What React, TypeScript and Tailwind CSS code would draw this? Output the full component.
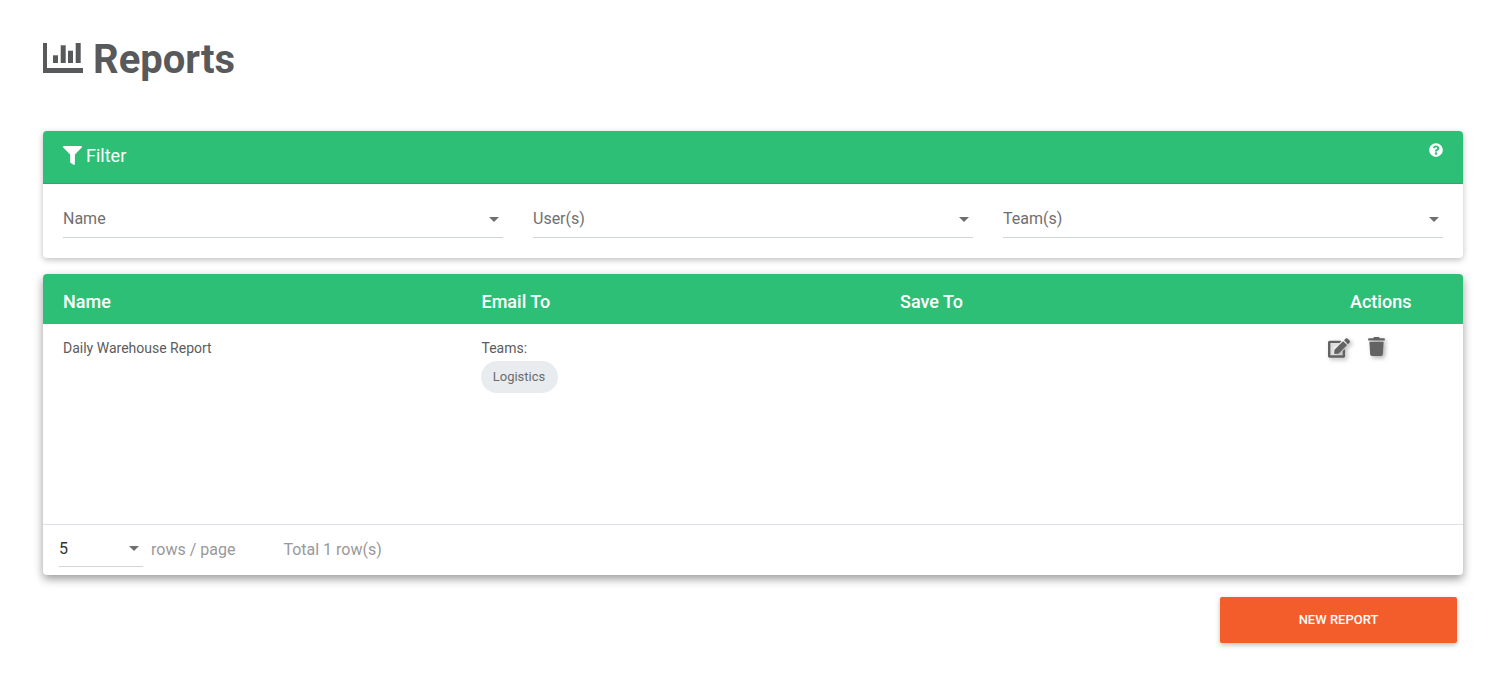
import { FaEdit, FaFilter, FaQuestionCircle, FaTrash } from "react-icons/fa";

function CaretDown() {
  return <span className="h-0 w-0 border-x-[5px] border-t-[5px] border-x-transparent border-t-[#6f6f6f]" />;
}

function FilterSelect({ label }: { label: string }) {
  return (
    <div className="flex h-[38px] items-center justify-between border-b border-[#ced4da]">
      <span className="text-[16px] text-[#707070]">{label}</span>
      <span className="mr-[4px] mt-[2px] flex"><CaretDown /></span>
    </div>
  );
}

function ChartIcon() {
  return (
    <svg width="40" height="30" viewBox="0 0 40 30" fill="#58595b">
      <rect x="0" y="0" width="4" height="30" />
      <rect x="0" y="25" width="40" height="5" />
      <rect x="10" y="12.3" width="5" height="7.7" />
      <rect x="17.7" y="2.3" width="5" height="17.7" />
      <rect x="25" y="7.7" width="5" height="12.3" />
      <rect x="32.7" y="0" width="5" height="20" />
    </svg>
  );
}

export default function App() {
  return (
    <div className="min-h-[699px] bg-white pl-[43px] pr-[35px] font-['Roboto',sans-serif]">
      {/* Title */}
      <div className="flex h-[131px] items-start pt-[37px]">
        <div className="flex items-start gap-[10px]">
          <div className="mt-[6px] flex"><ChartIcon /></div>
          <h1 className="text-[40px] leading-[46px] font-bold text-[#58595b]">Reports</h1>
        </div>
      </div>

      {/* Filter */}
      <section className="rounded-[4px] bg-white shadow-[0_2px_6px_rgba(0,0,0,0.25)]">
        <div className="flex h-[53px] justify-between rounded-t-[4px] border-b border-[#2aa96f] bg-[#2ebf77] px-[20px] text-white">
          <div className="flex items-center gap-[4px] pb-[4px]">
            <FaFilter size={19} />
            <span className="text-[18px]">Filter</span>
          </div>
          <div className="pt-[12px]"><FaQuestionCircle size={14} /></div>
        </div>
        <div className="grid h-[74px] grid-cols-3 gap-[30px] px-[20px] pt-[16px]">
          <FilterSelect label="Name" />
          <FilterSelect label="User(s)" />
          <FilterSelect label="Team(s)" />
        </div>
      </section>

      {/* Reports table */}
      <section className="mt-[16px] rounded-[4px] bg-white shadow-[0_4px_10px_rgba(0,0,0,0.4)]">
        <div className="grid h-[50px] grid-cols-[418.5px_418.5px_1fr_134px] items-center rounded-t-[4px] bg-[#2ebf77] pl-[20px] pt-[4px] text-[18px] font-medium text-white">
          <span>Name</span>
          <span>Email To</span>
          <span>Save To</span>
          <span className="pl-[21px]">Actions</span>
        </div>
        <div className="grid h-[201px] grid-cols-[418.5px_418.5px_1fr_134px] border-b border-[#dee2e6] pl-[20px] pt-[16px] text-[14px] text-[#5c5c5c]">
          <span className="leading-[17px]">Daily Warehouse Report</span>
          <div>
            <div className="leading-[17px]">Teams:</div>
            <span className="ml-[-1px] mt-[4px] inline-flex h-[32px] w-[77px] items-center justify-center rounded-full bg-[#e9ecef] text-[13px] text-[#6b6b6b]">Logistics</span>
          </div>
          <span />
          <div className="flex items-start gap-[17px] text-[#636363]">
            <FaEdit size={22} className="ml-[-1px] mt-[-3px] drop-shadow-[2px_2px_2px_rgba(0,0,0,0.3)]" />
            <FaTrash size={19} className="mt-[-3px] drop-shadow-[2px_2px_2px_rgba(0,0,0,0.3)]" />
          </div>
        </div>
        <div className="flex h-[50px] items-center pl-[16px] text-[16px] text-[#999999]">
          <div className="flex h-[42px] w-[84px] items-center justify-between self-start border-b border-[#d5d5d5] pt-[6px]">
            <span className="text-[16px] text-[#333]">5</span>
            <span className="mr-[4px] flex"><CaretDown /></span>
          </div>
          <span className="ml-[8px]">rows / page</span>
          <span className="ml-[48px]">Total 1 row(s)</span>
        </div>
      </section>

      {/* Actions */}
      <div className="mt-[22px] flex justify-end pr-[6px]">
        <button className="h-[46px] w-[237px] rounded-[2px] bg-[#f35c2b] pb-[1px] text-[13px] font-medium text-white shadow-[0_2px_5px_rgba(0,0,0,0.26)]">
          NEW REPORT
        </button>
      </div>
    </div>
  );
}
